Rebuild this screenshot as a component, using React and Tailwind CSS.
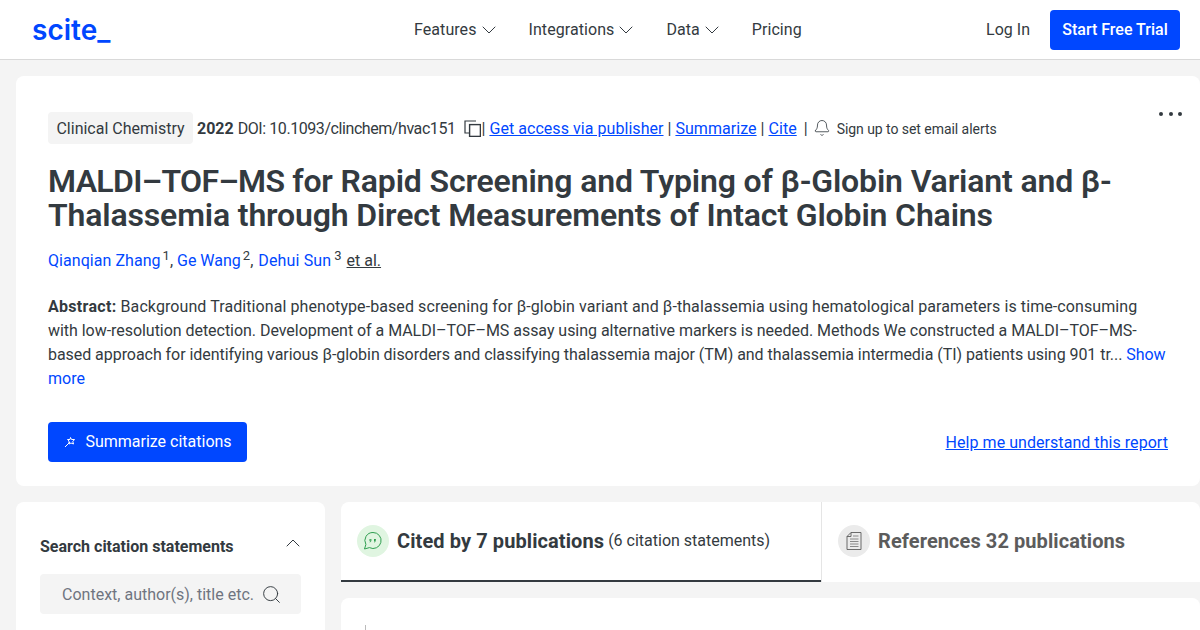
import React from "react";
import { ChevronDown, ChevronUp, Search, Bell } from "lucide-react";

const Nav = ({ children, chevron }) => (
  <div className="flex items-center text-[16px] tracking-[0.07px] text-[#333a40]">
    <span>{children}</span>
    {chevron && <ChevronDown size={24} strokeWidth={1} />}
  </div>
);

const Sep = () => <span className="mx-[4px]">|</span>;
const A = ({ children }) => <a className="text-[#0047ff] underline tracking-[0.05px]" href="#">{children}</a>;

export default function App() {
  return (
    <div className="h-[630px] w-[1200px] overflow-hidden bg-[#f4f4f4] text-[#333a40] font-['Roboto','Liberation_Sans',sans-serif]">
      <header className="flex h-[60px] items-center border-b border-[#d9d9d9] bg-white pl-[32px] pr-[20px]">
        <div className="w-[382px] text-[28px] font-semibold leading-none text-[#0047ff] font-['Inter',sans-serif]">scite_</div>
        <nav className="flex items-center gap-[28px]">
          <Nav chevron>Features</Nav>
          <Nav chevron>Integrations</Nav>
          <Nav chevron>Data</Nav>
          <Nav>Pricing</Nav>
        </nav>
        <div className="ml-auto flex items-center gap-[20px]">
          <span className="text-[16px]">Log In</span>
          <button className="h-[40px] w-[130px] rounded-[4px] bg-[#0047ff] text-[16px] font-medium text-white">Start Free Trial</button>
        </div>
      </header>

      <main className="flex flex-col gap-[16px] pl-[16px] pt-[16px]">
        <section className="relative h-[410px] rounded-lg bg-white px-[32px] pt-[36px]">
          <div className="flex h-[32px] items-center whitespace-nowrap text-[16px] text-[#333a40]">
            <span className="mr-[4px] flex h-[32px] w-[145px] items-center justify-center rounded-[4px] bg-[#f4f4f4] pt-[2px]">Clinical Chemistry</span>
            <span className="flex items-center pt-[2px]">
              <b className="font-bold">2022</b>
              <span className="ml-[4px] tracking-[-0.43px]">DOI: 10.1093/clinchem/hvac151</span>
              <svg className="ml-[8px] -mt-[2px]" width="17" height="17" viewBox="0 0 17 17" fill="none" stroke="#333a40" strokeWidth="1.2">
                <path d="M12 1H1V13H5" />
                <rect x="5.6" y="4.6" width="10.8" height="11.8" strokeWidth="1.4" />
              </svg>
              <span className="ml-[1px] mr-[4px]">|</span>
              <A>Get access via publisher</A>
              <Sep />
              <A>Summarize</A>
              <Sep />
              <A>Cite</A>
              <span className="ml-[7px] mr-[5px]">|</span>
              <Bell size={18} strokeWidth={1.1} className="-mt-[2px]" />
              <span className="ml-[6px] text-[14px] tracking-[-0.05px]">Sign up to set email alerts</span>
            </span>
          </div>
          <div className="absolute right-[18px] top-[36px] flex gap-[5.5px]">
            <span className="h-[4px] w-[4px] rounded-full bg-[#333a40]" />
            <span className="h-[4px] w-[4px] rounded-full bg-[#333a40]" />
            <span className="h-[4px] w-[4px] rounded-full bg-[#333a40]" />
          </div>
          <h1 className="mt-[20px] whitespace-nowrap text-[32px] font-semibold leading-[34px] text-[#333a40]">
            <span className="block tracking-[-0.14px]"><span className="tracking-[-0.65px]">MALDI–TOF–MS</span> for Rapid Screening and Typing of β-Globin Variant and β-</span>
            <span className="block tracking-[-0.15px]">Thalassemia through Direct Measurements of Intact Globin Chains</span>
          </h1>
          <p className="mt-[17px] text-[16px] leading-[24px] whitespace-nowrap">
            <span className="text-[#0047ff] tracking-[0.05px]">Qianqian Zhang</span><sup className="text-[13px] ml-[2px]">1</sup>, <span className="text-[#0047ff]">Ge Wang</span><sup className="text-[13px] ml-[2px]">2</sup>, <span className="ml-[1px] text-[#0047ff] tracking-[0.15px]">Dehui Sun</span><sup className="text-[13px] ml-[3px]">3</sup>
            <span className="ml-[5px] underline">et al.</span>
          </p>
          <div className="mt-[22px] whitespace-nowrap text-[16px] leading-[24px]">
            <div className="tracking-[0.08px]"><b className="font-bold tracking-[0.3px]">Abstract:</b> Background Traditional phenotype-based screening for β-globin variant and β-thalassemia using hematological parameters is time-consuming</div>
            <div className="tracking-[-0.04px]">with low-resolution detection. Development of a MALDI–TOF–MS assay using alternative markers is needed. Methods We constructed a MALDI–TOF–MS-</div>
            <div className="tracking-[-0.05px]">based approach for identifying various β-globin disorders and classifying thalassemia major (TM) and thalassemia intermedia (TI) patients using 901 tr... <span className="text-[#0047ff]">Show</span></div>
            <div className="text-[#0047ff]">more</div>
          </div>
          <div className="mt-[31px] flex items-center justify-between">
            <button className="flex h-[40px] w-[199px] items-center justify-center gap-[9px] rounded-[4px] bg-[#0047ff] pl-[1px] text-[16px] text-white">
              <svg width="12" height="12" viewBox="0 0 12 12" fill="none" stroke="white" strokeWidth="1">
                <path d="M1 11 L6 6" />
                <path d="M6.5 1.5 L7.5 3.5 L10.5 3.5 L8.8 5.5 L9.5 8 L7 7 L5 8 L5 5 L3.5 3.5 L6 3.5 Z" />
              </svg>
              Summarize citations
            </button>
            <span className="pt-[2px]"><A>Help me understand this report</A></span>
          </div>
        </section>

        <div className="flex gap-[16px]">
          <aside className="h-[200px] w-[309px] shrink-0 rounded-lg bg-white px-[24px] pt-[34px]">
            <div className="flex h-[22px] items-center justify-between">
              <span className="text-[16px] font-bold">Search citation statements</span>
              <ChevronUp size={24} strokeWidth={1} className="-mr-[4px] -mt-[8px]" />
            </div>
            <div className="mt-[16px] flex h-[40px] items-center justify-end gap-[7px] rounded-[4px] bg-[#f4f4f4] pr-[19px] pt-[1px] text-[16px] text-[#6f7480]">
              <span>Context, author(s), title etc.</span>
              <Search size={21} strokeWidth={1.1} className="text-[#333a40]" />
            </div>
          </aside>
          <div className="flex-1">
            <div className="flex h-[80px] rounded-t-lg bg-white">
              <div className="flex w-[480px] items-center border-b-2 border-[#333a40] pl-[16px]">
                <span className="flex h-[32px] w-[32px] items-center justify-center rounded-full bg-[#e0f5e1]">
                  <svg width="20" height="20" viewBox="0 0 20 20" fill="none" stroke="#2e9e4f" strokeWidth="1">
                    <path d="M10 1.5a8 8 0 1 1-3.6 15.1L1.5 18l1.4-4.6A8 8 0 0 1 10 1.5Z" />
                    <path d="M7 8v2.2M7.9 8v1.6c0 .8-.4 1.3-1.1 1.5M11.5 8v2.2M12.4 8v1.6c0 .8-.4 1.3-1.1 1.5" />
                  </svg>
                </span>
                <span className="ml-[8px] text-[20px] font-bold tracking-[0.09px]">Cited by 7 publications</span>
                <span className="ml-[4px] text-[16px]">(6 citation statements)</span>
              </div>
              <div className="flex flex-1 items-center border-l border-[#e5e5e5] pb-[2px] pl-[16px]">
                <span className="flex h-[32px] w-[32px] items-center justify-center rounded-full bg-[#ebebeb]">
                  <svg width="18" height="20" viewBox="0 0 18 20" fill="none" stroke="#5c5c5c" strokeWidth="0.9">
                    <path d="M6 1.5H16V18.5H2V5.5Z" />
                    <path d="M6 1.5V5.5H2" />
                    <path d="M8 5H13.5M5 8H13.5M5 10.5H13.5M5 13H13.5M5 15.5H13.5" strokeWidth="1" stroke="#8a8a8a" />
                  </svg>
                </span>
                <span className="ml-[8px] text-[20px] font-bold tracking-[0.08px] text-[#5c5c5c]">References 32 publications</span>
              </div>
            </div>
            <div className="relative mt-[16px] h-[60px] rounded-t-lg bg-white">
              <span className="absolute left-[24px] top-[27px] h-[10px] w-px bg-[#bbbbbb]" />
            </div>
          </div>
        </div>
      </main>
    </div>
  );
}
